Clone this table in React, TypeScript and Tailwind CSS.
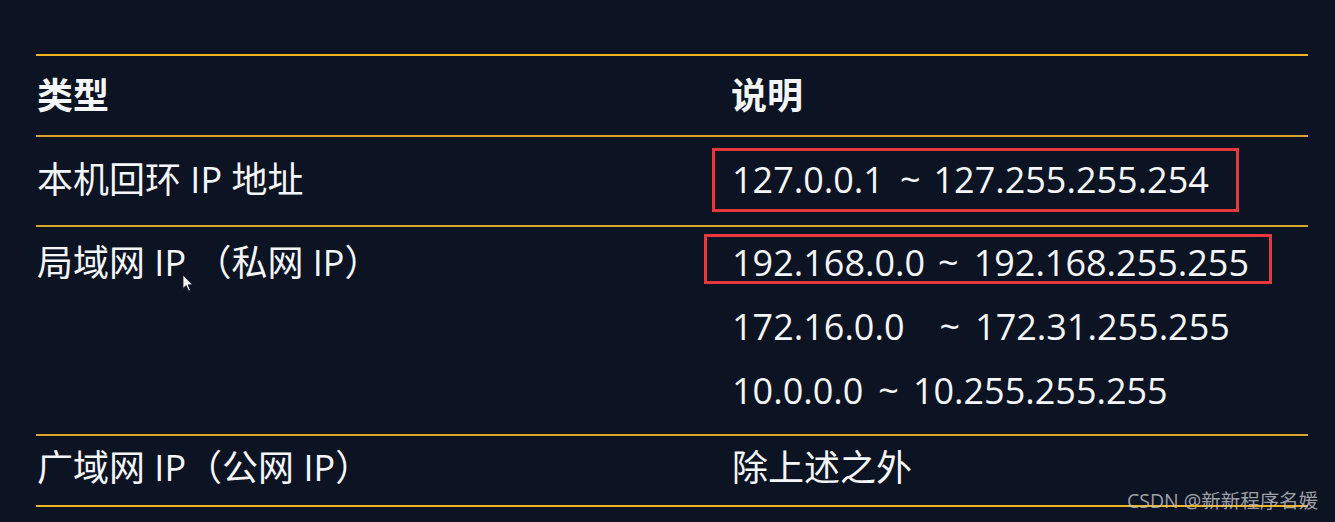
import React from 'react';

const font = { fontFamily: '"Open Sans", "Noto Sans CJK SC", sans-serif' };

const Cursor = () => (
  <svg className="absolute left-[182px] top-[274px]" width="12" height="19" viewBox="0 0 12 19">
    <path d="M1 1 L1 14.5 L4.2 11.5 L6.6 17 L8.4 16.2 L6.1 10.8 L10.5 10.8 Z" fill="#ffffff" stroke="#0c1322" strokeWidth="0.8" />
  </svg>
);

const Tilde = ({ l, r }: { l: string; r: string }) => <span className={`${l} ${r}`}>~</span>;

export default function App() {
  return (
    <div className="relative w-[1335px] h-[522px] bg-[#0c1322] text-[#f4f6fa] overflow-hidden" style={font}>
      <div className="pt-[54px] pl-[36px] pr-[27px]">
        <div className="border-t-2 border-b-2 border-[#f0b421]">
          {/* header */}
          <div className="grid grid-cols-[696px_1fr] h-[81px] items-center border-b-2 border-b-[#d6a42c] text-[36px] font-bold">
            <div className="pl-[1px]">类型</div>
            <div className="-ml-[1px]">说明</div>
          </div>

          {/* loopback */}
          <div className="grid grid-cols-[696px_1fr] h-[90px] items-center border-b-2 border-b-[#d6a42c] text-[36px] leading-[40px]">
            <div className="pl-[1px] -mt-[3px]">本机回环 IP 地址</div>
            <div className="-mt-[3px]">
              <span className="relative inline-block">
                127.0.0.1<Tilde l="ml-[16px]" r="mr-[13px]" />127.255.255.254
                <span className="absolute -left-[20px] -right-[30px] -top-[12px] -bottom-[12px] border-[3px] border-[#e8383d]" />
              </span>
            </div>
          </div>

          {/* private */}
          <div className="grid grid-cols-[696px_1fr] h-[209px] pt-[4px] border-b-2 border-b-[#d6a42c] text-[36px] leading-[64px]">
            <div className="pl-[1px]">局域网 IP （私网 IP）</div>
            <div className="flex flex-col items-start">
              <span className="relative inline-block">
                192.168.0.0<Tilde l="ml-[13px]" r="mr-[15px]" />192.168.255.255
                <span className="absolute -left-[28px] -right-[23px] top-[3px] bottom-[11px] border-[3px] border-[#e8383d]" />
              </span>
              <span>172.16.0.0<Tilde l="ml-[35px]" r="mr-[15px]" />172.31.255.255</span>
              <span>10.0.0.0<Tilde l="ml-[15px]" r="mr-[14px]" />10.255.255.255</span>
            </div>
          </div>

          {/* public */}
          <div className="grid grid-cols-[696px_1fr] h-[69px] items-center text-[36px] leading-[40px]">
            <div className="pl-[1px] -mt-[5px]">广域网 IP（公网 IP）</div>
            <div className="-mt-[5px]">除上述之外</div>
          </div>
        </div>
      </div>

      <Cursor />

      <div className="absolute left-[1127px] top-[488px] text-[19.5px] leading-[26px] text-[#c4c6cc]/80">
        CSDN @新新程序名媛
      </div>
    </div>
  );
}
